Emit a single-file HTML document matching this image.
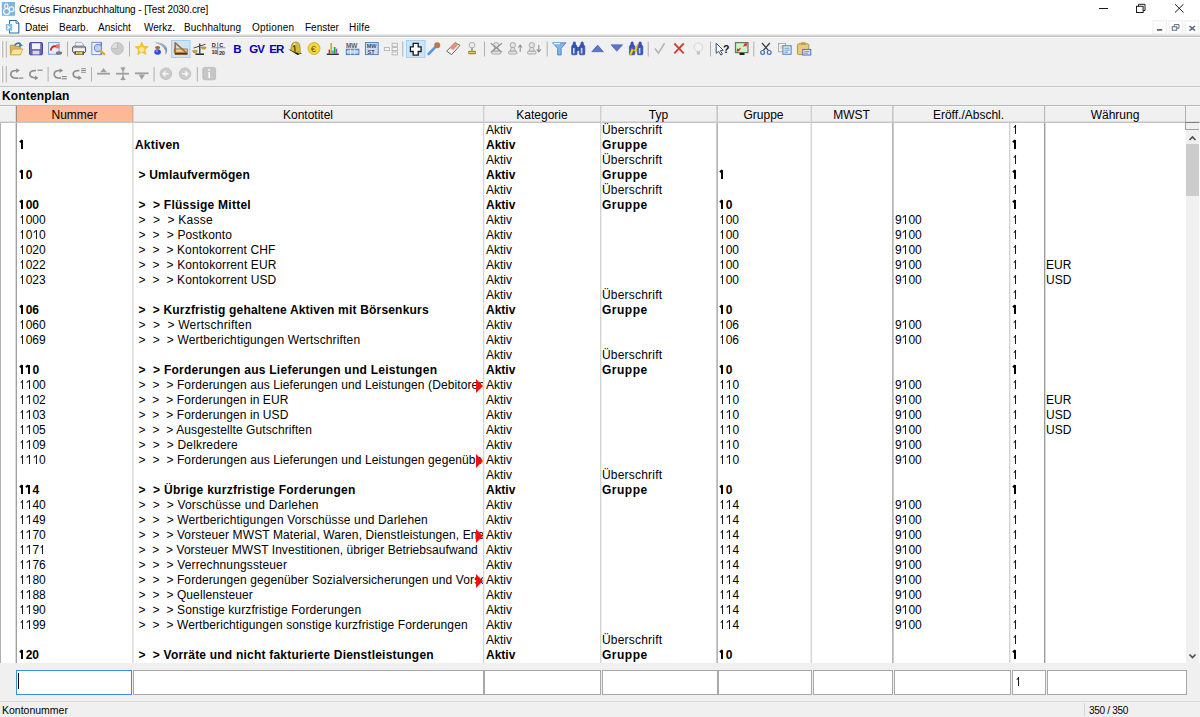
<!DOCTYPE html>
<html><head><meta charset="utf-8">
<style>
*{box-sizing:border-box}
html,body{margin:0;padding:0}
body{width:1200px;height:717px;overflow:hidden;position:relative;background:#f0f0f0;font-family:"Liberation Sans",sans-serif;color:#000}
.abs{position:absolute}
#top{position:absolute;left:0;top:0;width:1200px;height:34px;background:#fff}
.title{position:absolute;left:19px;top:3px;font-size:10px;color:#000;white-space:nowrap;line-height:14px;letter-spacing:-0.1px}
.menu{position:absolute;top:21px;font-size:10px;white-space:nowrap;line-height:14px;color:#000}
.label{position:absolute;left:2px;top:89px;font-size:12px;font-weight:bold;line-height:14px;letter-spacing:0.15px}
#grid{position:absolute;left:0;top:105px;width:1200px;height:558px;background:#fff;overflow:hidden}
#hdr{position:absolute;left:0;top:0;width:1200px;height:18px;background:#f0f0f0;border-top:1px solid #b9b9b9;border-bottom:1px solid #c4c4c4}
.h{position:absolute;top:1px;height:16px;font-size:12px;line-height:16px;text-align:center;color:#000;white-space:nowrap}
.hs{position:absolute;top:0;width:1px;height:16px;background:#bdbdbd}
.vl{position:absolute;width:1px;background:#dcdcdc}
.vd{position:absolute;width:1px;background:#a0a0a0}
.r{position:absolute;left:0;width:1186px;height:15px;font-size:12px;line-height:15px;color:#000;letter-spacing:0.18px}
.r .c{position:absolute;top:0;white-space:pre;overflow:hidden}
.d1{position:relative;color:transparent}
.d1::before{content:"";position:absolute;left:3.2px;bottom:3px;width:1.15px;height:8.7px;background:#1a1a1a}
.d1::after{content:"";position:absolute;left:0.5px;top:1.95px;width:3.2px;height:1.3px;background:#1a1a1a;transform:rotate(-42deg);transform-origin:right center}
.b .d1::before{left:2.3px;width:1.9px;height:8.7px;bottom:3.2px;background:#000}
.b .d1::after{left:-0.5px;top:1.45px;width:3.4px;height:1.8px;background:#000}
.b{font-weight:bold;letter-spacing:0.25px;color:#000}
.arr{position:absolute;left:476px;top:1px;width:0;height:0;border-top:7px solid transparent;border-bottom:7px solid transparent;border-left:7px solid #f01010}
.inp{position:absolute;top:670px;height:25px;background:#fff;border:1px solid #a8a8a8}
.status{position:absolute;left:2px;top:704px;font-size:10.5px;line-height:13px}
</style></head><body>
<div id="top"></div>
<!-- app icon -->
<svg class="abs" style="left:0;top:0" width="24" height="36" viewBox="0 0 24 36">
<rect x="1.8" y="2" width="13.2" height="13.8" fill="#82b3de"/>
<g fill="none" stroke="#fff" stroke-width="1.1"><ellipse cx="6.3" cy="6.2" rx="1.6" ry="2.4"/><circle cx="6.6" cy="11.5" r="3"/><circle cx="11.5" cy="9.2" r="2.4"/></g>
<path d="M9.6,20.5 H16 L18.8,23.3 V33 H9.6 Z" fill="#fff" stroke="#2a6e98" stroke-width="1.1" stroke-linejoin="round"/>
<path d="M16,20.5 V23.3 H18.8" fill="#dceaf4" stroke="#2a6e98" stroke-width="0.8"/>
<rect x="5.8" y="24" width="6.4" height="6.6" fill="#84bce8"/>
<path d="M7,25.6 L9.6,27.3 L7,29" fill="none" stroke="#fff" stroke-width="1.1"/>
</svg>
<div class="title">Crésus Finanzbuchhaltung - [Test 2030.cre]</div>
<div class="menu" style="left:25px">Datei</div>
<div class="menu" style="left:59px">Bearb.</div>
<div class="menu" style="left:98px">Ansicht</div>
<div class="menu" style="left:144px">Werkz.</div>
<div class="menu" style="left:184px;letter-spacing:0.15px">Buchhaltung</div>
<div class="menu" style="left:252px;letter-spacing:0.2px">Optionen</div>
<div class="menu" style="left:305px">Fenster</div>
<div class="menu" style="left:349px;letter-spacing:0.2px">Hilfe</div>
<!-- window controls -->
<svg class="abs" style="left:1090px;top:0" width="110" height="36" viewBox="1090 0 110 36">
<rect x="1099" y="8" width="9" height="1" fill="#1a1a1a"/>
<rect x="1136.5" y="6.3" width="6.6" height="6.2" fill="none" stroke="#1a1a1a" stroke-width="1"/>
<path d="M1138.5,6.3 V4.3 H1145 V10.5 H1143.1" fill="none" stroke="#1a1a1a" stroke-width="1"/>
<path d="M1175,4.2 L1183.5,12.5 M1183.5,4.2 L1175,12.5" stroke="#1a1a1a" stroke-width="1"/>
<g fill="#fff" stroke="#ececec" stroke-width="1"><rect x="1153" y="20.8" width="13.5" height="13"/><rect x="1169.2" y="20.8" width="13.5" height="13"/><rect x="1185.2" y="20.8" width="13.5" height="13"/></g>
<rect x="1157" y="29" width="5.2" height="1.8" fill="#5a6a82"/>
<g fill="none" stroke="#5a6a82" stroke-width="1"><rect x="1172.2" y="26.8" width="4.6" height="3.4"/><path d="M1174.2,26.8 V24.6 H1179 V28.2 H1176.8"/></g>
<path d="M1189.5,26 L1195,30.6 M1195,26 L1189.5,30.6" stroke="#5a6a82" stroke-width="1.6"/>
</svg>
<div class="abs" style="left:0;top:34px;width:1200px;height:1px;background:#ebebeb"></div>
<div class="abs" style="left:0;top:35px;width:1200px;height:1px;background:#d6d6d6"></div>
<div class="abs" style="left:0;top:36px;width:1200px;height:1px;background:#c4c4c4"></div>
<div class="abs" style="left:0;top:37px;width:1200px;height:1px;background:#f9f9f9"></div>
<svg class="abs" style="left:0;top:36px" width="830" height="52" viewBox="0 36 830 52">
<!-- grippers -->
<g fill="#fff"><rect x="1" y="41" width="1" height="16"/><rect x="4.5" y="41" width="1" height="16"/><rect x="1" y="66" width="1" height="16"/><rect x="4.5" y="66" width="1" height="16"/></g>
<g fill="#bcbcbc"><rect x="2" y="41" width="1.3" height="16.5"/><rect x="5.6" y="41" width="1.3" height="16.5"/><rect x="2" y="66" width="1.3" height="16.5"/><rect x="5.6" y="66" width="1.3" height="16.5"/></g>
<!-- separators tb1 -->
<g fill="#b0b0b0"><rect x="67" y="41.5" width="1" height="15"/><rect x="129" y="41.5" width="1" height="15"/><rect x="402.3" y="41.5" width="1" height="15"/><rect x="484" y="41.5" width="1" height="15"/><rect x="546.7" y="41.5" width="1" height="15"/><rect x="647.7" y="41.5" width="1" height="15"/><rect x="710" y="41.5" width="1" height="15"/><rect x="753.3" y="41.5" width="1" height="15"/>
<rect x="47.6" y="67" width="1" height="14.5"/><rect x="91" y="67" width="1" height="14.5"/><rect x="153.6" y="67" width="1" height="14.5"/><rect x="196.8" y="67" width="1" height="14.5"/></g>

<!-- 1 open folder -->
<path d="M10.3,54.6 V45.3 h3.6 l1,1 h5.5 v8.3 z" fill="#e0b850" stroke="#b89030" stroke-width="0.8"/>
<path d="M10.3,54.8 l2.6,-5.8 h10 l-2.6,5.8 z" fill="#f8e4a0" stroke="#c8a040" stroke-width="0.8"/>
<path d="M14.5,45.5 q2.5,-3.5 6,-1.8" fill="none" stroke="#3a70b8" stroke-width="1.7"/>
<path d="M19.2,42.2 l3.8,3.2 l-4.2,2.2 z" fill="#4a80c8"/>
<!-- 2 save -->
<rect x="29.5" y="42.6" width="13" height="12.2" rx="1" fill="#6868b8" stroke="#3a3a8a" stroke-width="0.9"/>
<rect x="32" y="43.3" width="8.2" height="5.8" fill="#f4f4f6"/>
<rect x="32.6" y="50.8" width="6.8" height="3.6" fill="#d8d8e8"/>
<!-- 3 revert -->
<rect x="48.5" y="42.5" width="10.5" height="11.8" fill="#e4eefa" stroke="#80a8d8" stroke-width="1"/>
<path d="M50.8,50.5 q0.5,-5 5.5,-4" fill="none" stroke="#d42828" stroke-width="2"/>
<rect x="56" y="44.3" width="3.5" height="4" fill="#f07070"/>
<ellipse cx="59" cy="53" rx="3.2" ry="1.8" fill="#7a7a7a"/>
<!-- 4 printer -->
<path d="M75.4,46.4 V42.4 H81.6 L83.2,44 V46.4" fill="#eef4fa" stroke="#90a8c8" stroke-width="0.8"/>
<rect x="72.6" y="46.2" width="13" height="6.6" rx="1.8" fill="#f4f4f4" stroke="#505050" stroke-width="1"/>
<rect x="73.2" y="46.6" width="11.8" height="1.6" fill="#9a9a9a"/>
<rect x="74.4" y="51.2" width="9.6" height="3.6" fill="#505050"/>
<rect x="76" y="51.8" width="6.4" height="2.4" fill="#f0d040"/>
<rect x="77.5" y="52.2" width="2" height="1.6" fill="#c8a020"/>
<!-- 5 preview -->
<rect x="91.8" y="42.4" width="9.6" height="12.2" fill="#e8f2fc" stroke="#7098cc" stroke-width="1"/>
<rect x="100.6" y="42.4" width="1" height="12.2" fill="#3a68a8"/>
<circle cx="98" cy="48" r="3.6" fill="#b4d4f4" stroke="#9484c8" stroke-width="1.1"/>
<path d="M100.8,51 L104.2,54.2" stroke="#d8b030" stroke-width="2.4" stroke-linecap="round"/>
<!-- 6 gray pie -->
<circle cx="117.4" cy="48.5" r="6" fill="#cbcbcb" stroke="#bdbdbd" stroke-width="0.9"/>
<path d="M117.4,48.5 V43 A5.5,5.5 0 0 0 111.9,48.5 Z" fill="#dedede"/>
<path d="M117.4,43 V48.5 H111.9" fill="none" stroke="#b4b4b4" stroke-width="0.7"/>
<!-- 7 star -->
<polygon points="141.70,42.00 143.58,46.31 148.26,46.77 144.74,49.89 145.76,54.48 141.70,52.10 137.64,54.48 138.66,49.89 135.14,46.77 139.82,46.31" fill="#f5c829" stroke="#e3b21c" stroke-width="0.6" stroke-linejoin="round"/>
<circle cx="141.7" cy="49.6" r="2.6" fill="#fae59a"/>
<!-- 8 inkwell + quill -->
<path d="M154.6,42.6 Q162,41.8 166.2,46.8 Q168.4,50.5 165.6,55 Q166,50.8 163.6,47.6 Q160.5,44.2 154.6,42.6 Z" fill="#7e98b8"/>
<path d="M156,43 Q162,43 165,47.5" fill="none" stroke="#b8c8dc" stroke-width="0.7"/>
<ellipse cx="157.6" cy="47.6" rx="2.6" ry="1.5" fill="#a86838"/>
<ellipse cx="157.6" cy="52" rx="3.3" ry="2.8" fill="#3344e0"/>
<ellipse cx="156.8" cy="51.2" rx="1.2" ry="1" fill="#8890ff"/>
<!-- 9 selected ruler -->
<rect x="171.5" y="40.5" width="18.5" height="17" fill="#cce4f7" stroke="#99d1ff" stroke-width="1"/>
<rect x="174.2" y="49" width="13" height="3.2" fill="#f0d890" stroke="#705018" stroke-width="0.7"/>
<path d="M175.2,42.8 V53.6 H187.2 Z" fill="none" stroke="#b86a28" stroke-width="1.7" stroke-linejoin="round"/>
<rect x="175" y="53" width="12.4" height="1.6" fill="#5a2e10"/>
<!-- 10 scale -->
<rect x="199" y="43.6" width="1.5" height="10" fill="#484848"/>
<rect x="195.5" y="53.4" width="8.5" height="1.6" fill="#303030"/>
<path d="M193.5,48 L205.5,44.3" stroke="#484848" stroke-width="1"/>
<path d="M192.6,50.6 h4.6 a2.3,2.3 0 0 1 -4.6,0 z" fill="#d8a830" stroke="#8a6a10" stroke-width="0.5"/>
<path d="M201.4,47 h4.6 a2.3,2.3 0 0 1 -4.6,0 z" fill="#d8a830" stroke="#8a6a10" stroke-width="0.5"/>
<!-- 11 D|C -->
<rect x="217" y="42.2" width="1.3" height="12.8" fill="#8aa4c0"/>
<rect x="211.5" y="47.1" width="14" height="1.2" fill="#8aa4c0"/>
<g font-family="Liberation Sans" font-size="5.6" font-weight="bold" fill="#303030"><text x="211.8" y="46.6">D</text><text x="219.3" y="46.6">C</text><text x="211.6" y="53.6" letter-spacing="-0.4">10</text><text x="219" y="54.6" letter-spacing="-0.4">20</text></g>
<!-- B GV ER -->
<g font-family="Liberation Sans" font-weight="bold" font-size="11.5" fill="#0000b8"><text x="233.2" y="53.3">B</text><text x="249.2" y="53.3" letter-spacing="-0.8">GV</text><text x="269.3" y="53.3" letter-spacing="-0.9">ER</text></g>
<!-- bell -->
<polygon points="288.3,49.3 291.6,50 302,53.3 297.6,55.1" fill="#141414"/>
<path d="M291,50.6 L291.3,46 Q291.9,42 295.8,42 Q299.7,42.2 300,46.6 L300.3,53.7 Z" fill="#d2bc3c" stroke="#9c8418" stroke-width="0.7"/>
<ellipse cx="294.6" cy="44.4" rx="1" ry="1.1" fill="#fff8d0"/>
<path d="M293.2,46.8 L294.6,45.8 L295.2,51.6" fill="none" stroke="#5a4a08" stroke-width="1.3"/>
<!-- euro -->
<circle cx="314" cy="48.5" r="6" fill="#f2d830" stroke="#c8b048" stroke-width="0.9"/>
<text x="310.8" y="52" font-family="Liberation Sans" font-size="9.5" fill="#7a5a08">€</text>
<!-- bar chart -->
<rect x="326.8" y="53.6" width="12" height="1.3" fill="#181818"/>
<rect x="328.6" y="49.7" width="1.6" height="4" fill="#e02020"/>
<rect x="330.4" y="43" width="1.7" height="10.7" fill="#d8a830"/>
<rect x="332.2" y="50.5" width="1.5" height="3.2" fill="#30a0e0"/>
<rect x="333.8" y="47" width="1.7" height="6.7" fill="#20b030"/>
<rect x="335.6" y="48.7" width="1.7" height="5" fill="#9060d0"/>
<!-- MW grid -->
<text x="346" y="47.6" font-family="Liberation Sans" font-weight="bold" font-size="6.5" fill="#506070" letter-spacing="-0.2">MW</text>
<rect x="346.3" y="49.2" width="12.6" height="5.4" fill="#a8c8f0" stroke="#4070b0" stroke-width="0.9"/>
<path d="M346.5,51.9 H358.7 M350.5,49.2 V54.6 M354.6,49.2 V54.6" stroke="#f4f8ff" stroke-width="0.7"/>
<!-- MWST -->
<rect x="365.4" y="42.6" width="12.8" height="12" fill="#c8dcf4" stroke="#4878b8" stroke-width="0.9"/>
<g font-family="Liberation Sans" font-weight="bold" font-size="5.5" fill="#405060"><text x="366.8" y="47.8" letter-spacing="-0.2">MW</text><text x="367.6" y="53.6" letter-spacing="-0.1">ST</text></g>
<!-- tree disabled -->
<g fill="#f6f6f6" stroke="#b4b4b4" stroke-width="0.9"><rect x="384.4" y="47.6" width="5" height="3"/><rect x="392.1" y="43.3" width="5.4" height="3"/><rect x="392.1" y="47.6" width="5.4" height="3"/><rect x="392.1" y="51.9" width="5.4" height="3"/></g>
<!-- selected cross -->
<rect x="406.5" y="40.5" width="18.5" height="17" fill="#cce4f7" stroke="#99d1ff" stroke-width="1"/>
<path d="M413.2,43.3 h5 v3.6 h2.9 v4.6 h-2.9 v3.6 h-5 v-3.6 h-2.8 v-4.6 h2.8 z" fill="#fff" stroke="#1a1a1a" stroke-width="1.3"/>
<!-- pipette -->
<path d="M428.6,54 L434.8,47.6" stroke="#5898e8" stroke-width="2.6" stroke-linecap="round"/>
<circle cx="437.2" cy="45.2" r="3" fill="#b87850"/>
<!-- eraser -->
<polygon points="446.6,51.2 455,42.6 460,45.4 451.6,54.6" fill="#f2f2f2" stroke="#5a5a5a" stroke-width="0.9"/>
<polygon points="449.8,47.9 455,42.6 458.4,44.6 453.2,50" fill="#e89070"/>
<!-- stamp -->
<circle cx="472" cy="45.2" r="2.8" fill="#eeeee4" stroke="#a0a0a0" stroke-width="0.8"/>
<rect x="471" y="47.8" width="2" height="3" fill="#a0a0a0"/>
<rect x="468.2" y="50.8" width="7.8" height="3.4" rx="0.8" fill="#c87a30"/>
<rect x="469" y="52" width="6.2" height="0.9" fill="#e8d060"/>
<!-- stamps gray -->
<g fill="#e4e4e4" stroke="#9a9a9a" stroke-width="0.8">
<circle cx="496.2" cy="45.2" r="2.7"/><path d="M494.8,47.6 L493.4,51.2 H499 L497.6,47.6 Z"/><rect x="491.8" y="51.2" width="8.8" height="2.8" rx="1"/>
<circle cx="512.8" cy="45.2" r="2.7"/><path d="M511.4,47.6 L510,51.2 H515.6 L514.2,47.6 Z"/><rect x="508.6" y="51.2" width="8.4" height="2.8" rx="1"/>
<circle cx="531.8" cy="45.2" r="2.7"/><path d="M530.4,47.6 L529,51.2 H534.6 L533.2,47.6 Z"/><rect x="527.6" y="51.2" width="8.4" height="2.8" rx="1"/>
</g>
<g stroke="#909090" stroke-width="1.1" fill="none">
<path d="M490.8,43.3 L502,52.2 M502,43.3 L490.8,52.2"/>
<path d="M520.2,51.8 V45.5 M518.3,47.5 L520.2,45.2 L522,47.5"/>
<path d="M538.8,45 V51.5 M536.8,49.4 L538.8,51.8 L540.8,49.4"/>
</g>
<!-- funnel -->
<polygon points="552.5,42.8 566,42.8 561.2,48.3 561.2,55 557.6,55 557.6,48.3" fill="#80b4e4" stroke="#4a7cc0" stroke-width="0.8"/>
<path d="M553.8,43.6 H560" stroke="#e8f4ff" stroke-width="1.2"/>
<!-- binoculars -->
<g fill="#3858c0" stroke="#28409a" stroke-width="0.6">
<rect x="571.6" y="45.5" width="5.4" height="9.3" rx="1"/><rect x="579.4" y="45.5" width="5.4" height="9.3" rx="1"/>
<path d="M572.6,45.8 L573.5,42 H575.2 L576,45.8 Z"/><path d="M580.4,45.8 L581.3,42 H583 L583.8,45.8 Z"/>
<rect x="576.6" y="47.5" width="3.2" height="3"/>
<rect x="629.4" y="45.5" width="5.4" height="9.3" rx="1"/><rect x="637.4" y="45.5" width="5.4" height="9.3" rx="1"/>
<path d="M630.4,45.8 L631.3,42 H633 L633.8,45.8 Z"/><path d="M638.4,45.8 L639.3,42 H641 L641.8,45.8 Z"/>
</g>
<g fill="#c8d8f8"><rect x="573" y="48" width="1.6" height="5.5"/><rect x="580.8" y="48" width="1.6" height="5.5"/><rect x="638.8" y="48" width="1.6" height="5.5"/></g>
<polygon points="629.4,55 631.6,48.6 634.2,50.2 637.6,44.4 638.2,45 636,51.8 633.4,50.4 631.2,55" fill="#f8e020" stroke="#b89000" stroke-width="0.6"/>
<!-- triangles -->
<polygon points="591.8,51.7 597.6,45.1 603.4,51.7" fill="#5878d0" stroke="#3858b0" stroke-width="0.6"/>
<polygon points="611,44.8 622.6,44.8 616.8,51.3" fill="#5878d0" stroke="#3858b0" stroke-width="0.6"/>
<!-- check -->
<path d="M655,48.6 L658.4,53.2 L664.6,43.2" fill="none" stroke="#b4b4b4" stroke-width="1.6"/>
<!-- red x -->
<path d="M674.3,43.5 L683.7,53.3 M683.7,43.5 L674.3,53.3" stroke="#c84434" stroke-width="1.9"/>
<!-- bulb -->
<circle cx="698.4" cy="47.2" r="4.3" fill="#f2f2f2" stroke="#d2d2d2" stroke-width="0.9"/>
<rect x="696.8" y="51.3" width="3.2" height="3.2" fill="#c4c4c4"/>
<!-- help cursor -->
<polygon points="716.2,43.2 716.2,53.3 718.6,51.2 720.8,55 722.4,54.2 720.4,50.5 723.2,50.3" fill="#fff" stroke="#344c88" stroke-width="1"/>
<text x="723" y="52.6" font-family="Liberation Sans" font-weight="bold" font-size="10.5" fill="#101010">?</text>
<!-- monitor -->
<rect x="735.5" y="42.6" width="12.5" height="10" fill="#c8f4c8" stroke="#707070" stroke-width="1.2"/>
<path d="M737.6,50.6 L740.6,48.2 M743.4,46.4 L746.4,44" stroke="#e82020" stroke-width="1.2"/>
<polygon points="736.6,51.8 737.2,48.2 740,50.8" fill="#e82020"/><polygon points="747.2,43.2 743.6,43.8 746.4,46.8" fill="#e82020"/>
<rect x="739.5" y="53" width="5" height="2" fill="#202020"/>
<!-- scissors -->
<path d="M762,43 L768.6,50.6 M769.8,43 L763.2,50.6" stroke="#2a3848" stroke-width="1.2"/>
<circle cx="762.6" cy="52.4" r="1.9" fill="none" stroke="#4070c0" stroke-width="1.2"/>
<circle cx="769.2" cy="52.4" r="1.9" fill="none" stroke="#4070c0" stroke-width="1.2"/>
<!-- copy -->
<rect x="778.4" y="43.4" width="7" height="8.4" fill="#f6f6f6" stroke="#9a9a9a" stroke-width="0.8"/>
<path d="M779.8,46 H783 M779.8,48 H783" stroke="#b0b0b0" stroke-width="0.6"/>
<rect x="782.9" y="45.8" width="8.2" height="8.4" fill="#eaf2fc" stroke="#3e6cb0" stroke-width="0.9"/>
<path d="M784.4,48.2 H789.6 M784.4,50.2 H789.6 M784.4,52.2 H788" stroke="#4a78b8" stroke-width="0.8"/>
<!-- paste -->
<rect x="797.4" y="43.8" width="11.4" height="10.8" rx="1.5" fill="#e6cc78" stroke="#a88e38" stroke-width="0.9"/>
<rect x="800.8" y="42.2" width="4.8" height="2.6" rx="0.6" fill="#b89c48"/>
<rect x="802.8" y="49.4" width="8" height="5.6" fill="#dbe8f8" stroke="#3e6cb0" stroke-width="0.9"/>
<path d="M804.2,51.6 H809.4 M804.2,53.2 H808" stroke="#4a78b8" stroke-width="0.7"/>

<!-- toolbar 2 -->
<g fill="none" stroke="#8e8e8e" stroke-width="1.7">
<path d="M17,70.5 Q10.8,70.2 10.8,74.2 Q10.8,78.2 17,78.2 H18"/>
<path d="M36,70.5 Q29.8,70.5 29.8,74 Q29.8,77.8 35.6,77.8"/>
<path d="M60.4,70.5 Q54.2,70.2 54.2,74.2 Q54.2,78.2 60.4,78.2 H61"/>
<path d="M79.4,70.5 Q73.2,70.5 73.2,74 Q73.2,77.8 79,77.8"/>
</g>
<g fill="#8e8e8e">
<polygon points="16.2,68.3 19.8,70.6 16.2,73"/><rect x="18.6" y="77.5" width="4.7" height="1.3"/>
<polygon points="35,75.5 38.4,78 35,80.3"/><rect x="37.6" y="69.6" width="5" height="1.3"/>
<polygon points="59.6,68.3 63.2,70.6 59.6,73"/><rect x="61.8" y="76" width="5" height="1.2"/><rect x="61.8" y="78.2" width="5" height="1.2"/>
<polygon points="78.4,75.5 81.8,78 78.4,80.3"/><rect x="81.2" y="68.2" width="4.7" height="1"/><rect x="81.2" y="70" width="4.7" height="1"/><rect x="81.2" y="71.8" width="4.7" height="1"/>
</g>
<g fill="#a0a0a0">
<rect x="97" y="72.8" width="13" height="1.8"/><polygon points="100.2,72.2 103.5,68 106.8,72.2"/>
<rect x="116" y="72.8" width="13" height="1.8"/><polygon points="120.2,67.4 125.8,67.4 123,71.6"/><polygon points="120.2,80 125.8,80 123,75.8"/><rect x="122.4" y="66.8" width="1.2" height="13.6"/>
<rect x="135" y="72.4" width="13.5" height="1.8"/><polygon points="138.5,74.6 145,74.6 141.7,79.8"/>
</g>
<circle cx="165.9" cy="73.7" r="5.8" fill="#cbcbcb" stroke="#bdbdbd" stroke-width="0.8"/>
<circle cx="185" cy="73.7" r="5.8" fill="#cbcbcb" stroke="#bdbdbd" stroke-width="0.8"/>
<path d="M168.6,73.7 H163.6 M165.6,71.3 L163.2,73.7 L165.6,76.1" fill="none" stroke="#f4f4f4" stroke-width="1.5"/>
<path d="M182.3,73.7 H187.3 M185.3,71.3 L187.7,73.7 L185.3,76.1" fill="none" stroke="#f4f4f4" stroke-width="1.5"/>
<rect x="202.8" y="67.4" width="12.8" height="12.4" rx="2" fill="#c6c6c6" stroke="#b8b8b8" stroke-width="0.8"/>
<rect x="208.3" y="69" width="1.8" height="1.8" fill="#f6f6f6"/><rect x="208.3" y="72" width="1.8" height="6" fill="#f6f6f6"/>
</svg>

<div class="abs" style="left:0;top:86px;width:1200px;height:1px;background:#c6c6c6"></div>
<div class="abs" style="left:0;top:87px;width:1200px;height:1px;background:#f4f4f4"></div>
<div class="label">Kontenplan</div>

<div id="grid">
 <div class="abs" style="left:0px;top:18px;width:1px;height:540px;background:#b0b0b0"></div>
 <div class="abs" style="left:15px;top:18px;width:1px;height:540px;background:#dadada"></div>
 <div class="abs" style="left:16px;top:18px;width:1px;height:540px;background:#a0a0a0"></div>
 <div class="abs" style="left:132px;top:18px;width:1px;height:540px;background:#e0e0e0"></div>
 <div class="abs" style="left:133px;top:18px;width:1px;height:540px;background:#e7e7e7"></div>
 <div class="abs" style="left:483px;top:18px;width:1px;height:540px;background:#d6d6d6"></div>
 <div class="abs" style="left:484px;top:18px;width:1px;height:540px;background:#f2f2f2"></div>
 <div class="abs" style="left:600px;top:18px;width:1px;height:540px;background:#d4d4d4"></div>
 <div class="abs" style="left:601px;top:18px;width:1px;height:540px;background:#ededed"></div>
 <div class="abs" style="left:716px;top:18px;width:1px;height:540px;background:#cacaca"></div>
 <div class="abs" style="left:717px;top:18px;width:1px;height:540px;background:#b4b4b4"></div>
 <div class="abs" style="left:810px;top:18px;width:1px;height:540px;background:#ececec"></div>
 <div class="abs" style="left:811px;top:18px;width:1px;height:540px;background:#d6d6d6"></div>
 <div class="abs" style="left:892px;top:18px;width:1px;height:540px;background:#b4b4b4"></div>
 <div class="abs" style="left:893px;top:18px;width:1px;height:540px;background:#cacaca"></div>
 <div class="abs" style="left:1009px;top:18px;width:1px;height:540px;background:#d4d4d4"></div>
 <div class="abs" style="left:1010px;top:18px;width:1px;height:540px;background:#ececec"></div>
 <div class="abs" style="left:1044px;top:18px;width:1px;height:540px;background:#9a9a9a"></div>
 <div class="abs" style="left:1045px;top:18px;width:1px;height:540px;background:#dadada"></div>
 <div id="hdr">
  <div class="abs" style="left:0;top:0;width:1200px;height:1px;background:#f7f7f7"></div>
  <div class="abs" style="left:0;top:15px;width:1200px;height:1px;background:#dcdcdc"></div>
  <div class="abs" style="left:17px;top:0;width:115px;height:16px;background:#fcb994"></div>
  <div class="hs" style="left:15px;background:#dcdcdc"></div>
  <div class="hs" style="left:16px;background:#a08a80"></div>
  <div class="hs" style="left:132px;background:#d4aa94"></div>
  <div class="hs" style="left:133px;background:#d6d6d6"></div>
  <div class="hs" style="left:483px;background:#d0d0d0"></div>
  <div class="hs" style="left:484px;background:#e2e2e2"></div>
  <div class="hs" style="left:600px;background:#d0d0d0"></div>
  <div class="hs" style="left:601px;background:#e2e2e2"></div>
  <div class="hs" style="left:716px;background:#d6d6d6"></div>
  <div class="hs" style="left:717px;background:#c8c8c8"></div>
  <div class="hs" style="left:810px;background:#e2e2e2"></div>
  <div class="hs" style="left:811px;background:#d0d0d0"></div>
  <div class="hs" style="left:892px;background:#c8c8c8"></div>
  <div class="hs" style="left:893px;background:#d6d6d6"></div>
  <div class="hs" style="left:1044px;background:#b8b8b8"></div>
  <div class="hs" style="left:1045px;background:#e8e8e8"></div>
  <div class="hs" style="left:1185px;background:#b0b0b0"></div>
  <div class="h" style="left:17px;width:115px">Nummer</div>
  <div class="h" style="left:133px;width:350px">Kontotitel</div>
  <div class="h" style="left:484px;width:116px">Kategorie</div>
  <div class="h" style="left:601px;width:115px">Typ</div>
  <div class="h" style="left:717px;width:93px">Gruppe</div>
  <div class="h" style="left:811px;width:81px">MWST</div>
  <div class="h" style="left:893px;width:151px">Eröff./Abschl.</div>
  <div class="h" style="left:1045px;width:140px">Währung</div>
 </div>
 <!-- scrollbar -->
 <div class="abs" style="left:1186px;top:18px;width:14px;height:540px;background:#f0f0f0"></div>
 <div class="abs" style="left:1185px;top:17px;width:14px;height:8px;background:#f0f0f0;border-left:1px solid #a0a0a0;border-top:1px solid #808080;border-bottom:1px solid #a0a0a0"></div>
 <div class="abs" style="left:1186px;top:39px;width:13px;height:52px;background:#cdcdcd"></div>
 <svg class="abs" style="left:1186px;top:28px" width="14" height="12" viewBox="0 0 14 12"><path d="M3.5,7 L6.5,4 L9.5,7" fill="none" stroke="#505050" stroke-width="1.7"/></svg>
 <svg class="abs" style="left:1186px;top:546px" width="14" height="12" viewBox="0 0 14 12"><path d="M3.5,3.5 L6.5,6.5 L9.5,3.5" fill="none" stroke="#505050" stroke-width="1.7"/></svg>
 <div class="abs" style="left:1199px;top:18px;width:1px;height:540px;background:#fafafa"></div>
</div>
<div id="rows" class="abs" style="left:0;top:0">
<div class="r" style="top:123px"><span class="c" style="left:486px;width:114px;letter-spacing:0">Aktiv</span><span class="c" style="left:602px;width:113px;letter-spacing:0.2px">Überschrift</span><span class="c" style="left:1012px;width:30px;letter-spacing:0"><span class="d1">1</span></span></div>
<div class="r b" style="top:138px"><span class="c" style="left:19px;width:113px;letter-spacing:0"><span class="d1">1</span></span><span class="c" style="left:135px;width:348px;letter-spacing:0.208px">Aktiven</span><span class="c" style="left:486px;width:114px;letter-spacing:0">Aktiv</span><span class="c" style="left:602px;width:113px;letter-spacing:0.5px">Gruppe</span><span class="c" style="left:1012px;width:30px;letter-spacing:0"><span class="d1">1</span></span></div>
<div class="r" style="top:153px"><span class="c" style="left:486px;width:114px;letter-spacing:0">Aktiv</span><span class="c" style="left:602px;width:113px;letter-spacing:0.2px">Überschrift</span><span class="c" style="left:1012px;width:30px;letter-spacing:0"><span class="d1">1</span></span></div>
<div class="r b" style="top:168px"><span class="c" style="left:19px;width:113px;letter-spacing:0"><span class="d1">1</span>0</span><span class="c" style="left:135px;width:348px;letter-spacing:0.194px"> &gt; Umlaufvermögen</span><span class="c" style="left:486px;width:114px;letter-spacing:0">Aktiv</span><span class="c" style="left:602px;width:113px;letter-spacing:0.5px">Gruppe</span><span class="c" style="left:719px;width:90px;letter-spacing:0"><span class="d1">1</span></span><span class="c" style="left:1012px;width:30px;letter-spacing:0"><span class="d1">1</span></span></div>
<div class="r" style="top:183px"><span class="c" style="left:486px;width:114px;letter-spacing:0">Aktiv</span><span class="c" style="left:602px;width:113px;letter-spacing:0.2px">Überschrift</span><span class="c" style="left:1012px;width:30px;letter-spacing:0"><span class="d1">1</span></span></div>
<div class="r b" style="top:198px"><span class="c" style="left:19px;width:113px;letter-spacing:0"><span class="d1">1</span>00</span><span class="c" style="left:135px;width:348px;letter-spacing:0.250px"> &gt;  &gt; Flüssige Mittel</span><span class="c" style="left:486px;width:114px;letter-spacing:0">Aktiv</span><span class="c" style="left:602px;width:113px;letter-spacing:0.5px">Gruppe</span><span class="c" style="left:719px;width:90px;letter-spacing:0"><span class="d1">1</span>0</span><span class="c" style="left:1012px;width:30px;letter-spacing:0"><span class="d1">1</span></span></div>
<div class="r" style="top:213px"><span class="c" style="left:19px;width:113px;letter-spacing:0"><span class="d1">1</span>000</span><span class="c" style="left:135px;width:348px;letter-spacing:0.249px"> &gt;  &gt;  &gt; Kasse</span><span class="c" style="left:486px;width:114px;letter-spacing:0">Aktiv</span><span class="c" style="left:719px;width:90px;letter-spacing:0"><span class="d1">1</span>00</span><span class="c" style="left:895px;width:114px;letter-spacing:0">9<span class="d1">1</span>00</span><span class="c" style="left:1012px;width:30px;letter-spacing:0"><span class="d1">1</span></span></div>
<div class="r" style="top:228px"><span class="c" style="left:19px;width:113px;letter-spacing:0"><span class="d1">1</span>0<span class="d1">1</span>0</span><span class="c" style="left:135px;width:348px;letter-spacing:0.151px"> &gt;  &gt;  &gt; Postkonto</span><span class="c" style="left:486px;width:114px;letter-spacing:0">Aktiv</span><span class="c" style="left:719px;width:90px;letter-spacing:0"><span class="d1">1</span>00</span><span class="c" style="left:895px;width:114px;letter-spacing:0">9<span class="d1">1</span>00</span><span class="c" style="left:1012px;width:30px;letter-spacing:0"><span class="d1">1</span></span></div>
<div class="r" style="top:243px"><span class="c" style="left:19px;width:113px;letter-spacing:0"><span class="d1">1</span>020</span><span class="c" style="left:135px;width:348px;letter-spacing:0.109px"> &gt;  &gt;  &gt; Kontokorrent CHF</span><span class="c" style="left:486px;width:114px;letter-spacing:0">Aktiv</span><span class="c" style="left:719px;width:90px;letter-spacing:0"><span class="d1">1</span>00</span><span class="c" style="left:895px;width:114px;letter-spacing:0">9<span class="d1">1</span>00</span><span class="c" style="left:1012px;width:30px;letter-spacing:0"><span class="d1">1</span></span></div>
<div class="r" style="top:258px"><span class="c" style="left:19px;width:113px;letter-spacing:0"><span class="d1">1</span>022</span><span class="c" style="left:135px;width:348px;letter-spacing:0.126px"> &gt;  &gt;  &gt; Kontokorrent EUR</span><span class="c" style="left:486px;width:114px;letter-spacing:0">Aktiv</span><span class="c" style="left:719px;width:90px;letter-spacing:0"><span class="d1">1</span>00</span><span class="c" style="left:895px;width:114px;letter-spacing:0">9<span class="d1">1</span>00</span><span class="c" style="left:1012px;width:30px;letter-spacing:0"><span class="d1">1</span></span><span class="c" style="left:1046px;width:138px;letter-spacing:0">EUR</span></div>
<div class="r" style="top:273px"><span class="c" style="left:19px;width:113px;letter-spacing:0"><span class="d1">1</span>023</span><span class="c" style="left:135px;width:348px;letter-spacing:0.117px"> &gt;  &gt;  &gt; Kontokorrent USD</span><span class="c" style="left:486px;width:114px;letter-spacing:0">Aktiv</span><span class="c" style="left:719px;width:90px;letter-spacing:0"><span class="d1">1</span>00</span><span class="c" style="left:895px;width:114px;letter-spacing:0">9<span class="d1">1</span>00</span><span class="c" style="left:1012px;width:30px;letter-spacing:0"><span class="d1">1</span></span><span class="c" style="left:1046px;width:138px;letter-spacing:0">USD</span></div>
<div class="r" style="top:288px"><span class="c" style="left:486px;width:114px;letter-spacing:0">Aktiv</span><span class="c" style="left:602px;width:113px;letter-spacing:0.2px">Überschrift</span><span class="c" style="left:1012px;width:30px;letter-spacing:0"><span class="d1">1</span></span></div>
<div class="r b" style="top:303px"><span class="c" style="left:19px;width:113px;letter-spacing:0"><span class="d1">1</span>06</span><span class="c" style="left:135px;width:348px;letter-spacing:0.189px"> &gt;  &gt; Kurzfristig gehaltene Aktiven mit Börsenkurs</span><span class="c" style="left:486px;width:114px;letter-spacing:0">Aktiv</span><span class="c" style="left:602px;width:113px;letter-spacing:0.5px">Gruppe</span><span class="c" style="left:719px;width:90px;letter-spacing:0"><span class="d1">1</span>0</span><span class="c" style="left:1012px;width:30px;letter-spacing:0"><span class="d1">1</span></span></div>
<div class="r" style="top:318px"><span class="c" style="left:19px;width:113px;letter-spacing:0"><span class="d1">1</span>060</span><span class="c" style="left:135px;width:348px;letter-spacing:0.247px"> &gt;  &gt;  &gt; Wertschriften</span><span class="c" style="left:486px;width:114px;letter-spacing:0">Aktiv</span><span class="c" style="left:719px;width:90px;letter-spacing:0"><span class="d1">1</span>06</span><span class="c" style="left:895px;width:114px;letter-spacing:0">9<span class="d1">1</span>00</span><span class="c" style="left:1012px;width:30px;letter-spacing:0"><span class="d1">1</span></span></div>
<div class="r" style="top:333px"><span class="c" style="left:19px;width:113px;letter-spacing:0"><span class="d1">1</span>069</span><span class="c" style="left:135px;width:348px;letter-spacing:0.161px"> &gt;  &gt;  &gt; Wertberichtigungen Wertschriften</span><span class="c" style="left:486px;width:114px;letter-spacing:0">Aktiv</span><span class="c" style="left:719px;width:90px;letter-spacing:0"><span class="d1">1</span>06</span><span class="c" style="left:895px;width:114px;letter-spacing:0">9<span class="d1">1</span>00</span><span class="c" style="left:1012px;width:30px;letter-spacing:0"><span class="d1">1</span></span></div>
<div class="r" style="top:348px"><span class="c" style="left:486px;width:114px;letter-spacing:0">Aktiv</span><span class="c" style="left:602px;width:113px;letter-spacing:0.2px">Überschrift</span><span class="c" style="left:1012px;width:30px;letter-spacing:0"><span class="d1">1</span></span></div>
<div class="r b" style="top:363px"><span class="c" style="left:19px;width:113px;letter-spacing:0"><span class="d1">1</span><span class="d1">1</span>0</span><span class="c" style="left:135px;width:348px;letter-spacing:0.254px"> &gt;  &gt; Forderungen aus Lieferungen und Leistungen</span><span class="c" style="left:486px;width:114px;letter-spacing:0">Aktiv</span><span class="c" style="left:602px;width:113px;letter-spacing:0.5px">Gruppe</span><span class="c" style="left:719px;width:90px;letter-spacing:0"><span class="d1">1</span>0</span><span class="c" style="left:1012px;width:30px;letter-spacing:0"><span class="d1">1</span></span></div>
<div class="r" style="top:378px"><span class="c" style="left:19px;width:113px;letter-spacing:0"><span class="d1">1</span><span class="d1">1</span>00</span><span class="c" style="left:135px;width:348px;letter-spacing:0.100px"> &gt;  &gt;  &gt; Forderungen aus Lieferungen und Leistungen (Debitoren)</span><span class="c" style="left:486px;width:114px;letter-spacing:0">Aktiv</span><span class="c" style="left:719px;width:90px;letter-spacing:0"><span class="d1">1</span><span class="d1">1</span>0</span><span class="c" style="left:895px;width:114px;letter-spacing:0">9<span class="d1">1</span>00</span><span class="c" style="left:1012px;width:30px;letter-spacing:0"><span class="d1">1</span></span><i class="arr"></i></div>
<div class="r" style="top:393px"><span class="c" style="left:19px;width:113px;letter-spacing:0"><span class="d1">1</span><span class="d1">1</span>02</span><span class="c" style="left:135px;width:348px;letter-spacing:0.088px"> &gt;  &gt;  &gt; Forderungen in EUR</span><span class="c" style="left:486px;width:114px;letter-spacing:0">Aktiv</span><span class="c" style="left:719px;width:90px;letter-spacing:0"><span class="d1">1</span><span class="d1">1</span>0</span><span class="c" style="left:895px;width:114px;letter-spacing:0">9<span class="d1">1</span>00</span><span class="c" style="left:1012px;width:30px;letter-spacing:0"><span class="d1">1</span></span><span class="c" style="left:1046px;width:138px;letter-spacing:0">EUR</span></div>
<div class="r" style="top:408px"><span class="c" style="left:19px;width:113px;letter-spacing:0"><span class="d1">1</span><span class="d1">1</span>03</span><span class="c" style="left:135px;width:348px;letter-spacing:0.088px"> &gt;  &gt;  &gt; Forderungen in USD</span><span class="c" style="left:486px;width:114px;letter-spacing:0">Aktiv</span><span class="c" style="left:719px;width:90px;letter-spacing:0"><span class="d1">1</span><span class="d1">1</span>0</span><span class="c" style="left:895px;width:114px;letter-spacing:0">9<span class="d1">1</span>00</span><span class="c" style="left:1012px;width:30px;letter-spacing:0"><span class="d1">1</span></span><span class="c" style="left:1046px;width:138px;letter-spacing:0">USD</span></div>
<div class="r" style="top:423px"><span class="c" style="left:19px;width:113px;letter-spacing:0"><span class="d1">1</span><span class="d1">1</span>05</span><span class="c" style="left:135px;width:348px;letter-spacing:0.092px"> &gt;  &gt;  &gt; Ausgestellte Gutschriften</span><span class="c" style="left:486px;width:114px;letter-spacing:0">Aktiv</span><span class="c" style="left:719px;width:90px;letter-spacing:0"><span class="d1">1</span><span class="d1">1</span>0</span><span class="c" style="left:895px;width:114px;letter-spacing:0">9<span class="d1">1</span>00</span><span class="c" style="left:1012px;width:30px;letter-spacing:0"><span class="d1">1</span></span><span class="c" style="left:1046px;width:138px;letter-spacing:0">USD</span></div>
<div class="r" style="top:438px"><span class="c" style="left:19px;width:113px;letter-spacing:0"><span class="d1">1</span><span class="d1">1</span>09</span><span class="c" style="left:135px;width:348px;letter-spacing:0.163px"> &gt;  &gt;  &gt; Delkredere</span><span class="c" style="left:486px;width:114px;letter-spacing:0">Aktiv</span><span class="c" style="left:719px;width:90px;letter-spacing:0"><span class="d1">1</span><span class="d1">1</span>0</span><span class="c" style="left:895px;width:114px;letter-spacing:0">9<span class="d1">1</span>00</span><span class="c" style="left:1012px;width:30px;letter-spacing:0"><span class="d1">1</span></span></div>
<div class="r" style="top:453px"><span class="c" style="left:19px;width:113px;letter-spacing:0"><span class="d1">1</span><span class="d1">1</span><span class="d1">1</span>0</span><span class="c" style="left:135px;width:348px;letter-spacing:0.100px"> &gt;  &gt;  &gt; Forderungen aus Lieferungen und Leistungen gegenüber</span><span class="c" style="left:486px;width:114px;letter-spacing:0">Aktiv</span><span class="c" style="left:719px;width:90px;letter-spacing:0"><span class="d1">1</span><span class="d1">1</span>0</span><span class="c" style="left:895px;width:114px;letter-spacing:0">9<span class="d1">1</span>00</span><span class="c" style="left:1012px;width:30px;letter-spacing:0"><span class="d1">1</span></span><i class="arr"></i></div>
<div class="r" style="top:468px"><span class="c" style="left:486px;width:114px;letter-spacing:0">Aktiv</span><span class="c" style="left:602px;width:113px;letter-spacing:0.2px">Überschrift</span><span class="c" style="left:1012px;width:30px;letter-spacing:0"><span class="d1">1</span></span></div>
<div class="r b" style="top:483px"><span class="c" style="left:19px;width:113px;letter-spacing:0"><span class="d1">1</span><span class="d1">1</span>4</span><span class="c" style="left:135px;width:348px;letter-spacing:0.267px"> &gt;  &gt; Übrige kurzfristige Forderungen</span><span class="c" style="left:486px;width:114px;letter-spacing:0">Aktiv</span><span class="c" style="left:602px;width:113px;letter-spacing:0.5px">Gruppe</span><span class="c" style="left:719px;width:90px;letter-spacing:0"><span class="d1">1</span>0</span><span class="c" style="left:1012px;width:30px;letter-spacing:0"><span class="d1">1</span></span></div>
<div class="r" style="top:498px"><span class="c" style="left:19px;width:113px;letter-spacing:0"><span class="d1">1</span><span class="d1">1</span>40</span><span class="c" style="left:135px;width:348px;letter-spacing:0.164px"> &gt;  &gt;  &gt; Vorschüsse und Darlehen</span><span class="c" style="left:486px;width:114px;letter-spacing:0">Aktiv</span><span class="c" style="left:719px;width:90px;letter-spacing:0"><span class="d1">1</span><span class="d1">1</span>4</span><span class="c" style="left:895px;width:114px;letter-spacing:0">9<span class="d1">1</span>00</span><span class="c" style="left:1012px;width:30px;letter-spacing:0"><span class="d1">1</span></span></div>
<div class="r" style="top:513px"><span class="c" style="left:19px;width:113px;letter-spacing:0"><span class="d1">1</span><span class="d1">1</span>49</span><span class="c" style="left:135px;width:348px;letter-spacing:0.142px"> &gt;  &gt;  &gt; Wertberichtigungen Vorschüsse und Darlehen</span><span class="c" style="left:486px;width:114px;letter-spacing:0">Aktiv</span><span class="c" style="left:719px;width:90px;letter-spacing:0"><span class="d1">1</span><span class="d1">1</span>4</span><span class="c" style="left:895px;width:114px;letter-spacing:0">9<span class="d1">1</span>00</span><span class="c" style="left:1012px;width:30px;letter-spacing:0"><span class="d1">1</span></span></div>
<div class="r" style="top:528px"><span class="c" style="left:19px;width:113px;letter-spacing:0"><span class="d1">1</span><span class="d1">1</span>70</span><span class="c" style="left:135px;width:348px;letter-spacing:0.100px"> &gt;  &gt;  &gt; Vorsteuer MWST Material, Waren, Dienstleistungen, Energie</span><span class="c" style="left:486px;width:114px;letter-spacing:0">Aktiv</span><span class="c" style="left:719px;width:90px;letter-spacing:0"><span class="d1">1</span><span class="d1">1</span>4</span><span class="c" style="left:895px;width:114px;letter-spacing:0">9<span class="d1">1</span>00</span><span class="c" style="left:1012px;width:30px;letter-spacing:0"><span class="d1">1</span></span><i class="arr"></i></div>
<div class="r" style="top:543px"><span class="c" style="left:19px;width:113px;letter-spacing:0"><span class="d1">1</span><span class="d1">1</span>7<span class="d1">1</span></span><span class="c" style="left:135px;width:348px;letter-spacing:0.052px"> &gt;  &gt;  &gt; Vorsteuer MWST Investitionen, übriger Betriebsaufwand</span><span class="c" style="left:486px;width:114px;letter-spacing:0">Aktiv</span><span class="c" style="left:719px;width:90px;letter-spacing:0"><span class="d1">1</span><span class="d1">1</span>4</span><span class="c" style="left:895px;width:114px;letter-spacing:0">9<span class="d1">1</span>00</span><span class="c" style="left:1012px;width:30px;letter-spacing:0"><span class="d1">1</span></span></div>
<div class="r" style="top:558px"><span class="c" style="left:19px;width:113px;letter-spacing:0"><span class="d1">1</span><span class="d1">1</span>76</span><span class="c" style="left:135px;width:348px;letter-spacing:0.134px"> &gt;  &gt;  &gt; Verrechnungssteuer</span><span class="c" style="left:486px;width:114px;letter-spacing:0">Aktiv</span><span class="c" style="left:719px;width:90px;letter-spacing:0"><span class="d1">1</span><span class="d1">1</span>4</span><span class="c" style="left:895px;width:114px;letter-spacing:0">9<span class="d1">1</span>00</span><span class="c" style="left:1012px;width:30px;letter-spacing:0"><span class="d1">1</span></span></div>
<div class="r" style="top:573px"><span class="c" style="left:19px;width:113px;letter-spacing:0"><span class="d1">1</span><span class="d1">1</span>80</span><span class="c" style="left:135px;width:348px;letter-spacing:0.100px"> &gt;  &gt;  &gt; Forderungen gegenüber Sozialversicherungen und Vorsorge</span><span class="c" style="left:486px;width:114px;letter-spacing:0">Aktiv</span><span class="c" style="left:719px;width:90px;letter-spacing:0"><span class="d1">1</span><span class="d1">1</span>4</span><span class="c" style="left:895px;width:114px;letter-spacing:0">9<span class="d1">1</span>00</span><span class="c" style="left:1012px;width:30px;letter-spacing:0"><span class="d1">1</span></span><i class="arr"></i></div>
<div class="r" style="top:588px"><span class="c" style="left:19px;width:113px;letter-spacing:0"><span class="d1">1</span><span class="d1">1</span>88</span><span class="c" style="left:135px;width:348px;letter-spacing:0.099px"> &gt;  &gt;  &gt; Quellensteuer</span><span class="c" style="left:486px;width:114px;letter-spacing:0">Aktiv</span><span class="c" style="left:719px;width:90px;letter-spacing:0"><span class="d1">1</span><span class="d1">1</span>4</span><span class="c" style="left:895px;width:114px;letter-spacing:0">9<span class="d1">1</span>00</span><span class="c" style="left:1012px;width:30px;letter-spacing:0"><span class="d1">1</span></span></div>
<div class="r" style="top:603px"><span class="c" style="left:19px;width:113px;letter-spacing:0"><span class="d1">1</span><span class="d1">1</span>90</span><span class="c" style="left:135px;width:348px;letter-spacing:0.121px"> &gt;  &gt;  &gt; Sonstige kurzfristige Forderungen</span><span class="c" style="left:486px;width:114px;letter-spacing:0">Aktiv</span><span class="c" style="left:719px;width:90px;letter-spacing:0"><span class="d1">1</span><span class="d1">1</span>4</span><span class="c" style="left:895px;width:114px;letter-spacing:0">9<span class="d1">1</span>00</span><span class="c" style="left:1012px;width:30px;letter-spacing:0"><span class="d1">1</span></span></div>
<div class="r" style="top:618px"><span class="c" style="left:19px;width:113px;letter-spacing:0"><span class="d1">1</span><span class="d1">1</span>99</span><span class="c" style="left:135px;width:348px;letter-spacing:0.105px"> &gt;  &gt;  &gt; Wertberichtigungen sonstige kurzfristige Forderungen</span><span class="c" style="left:486px;width:114px;letter-spacing:0">Aktiv</span><span class="c" style="left:719px;width:90px;letter-spacing:0"><span class="d1">1</span><span class="d1">1</span>4</span><span class="c" style="left:895px;width:114px;letter-spacing:0">9<span class="d1">1</span>00</span><span class="c" style="left:1012px;width:30px;letter-spacing:0"><span class="d1">1</span></span></div>
<div class="r" style="top:633px"><span class="c" style="left:486px;width:114px;letter-spacing:0">Aktiv</span><span class="c" style="left:602px;width:113px;letter-spacing:0.2px">Überschrift</span><span class="c" style="left:1012px;width:30px;letter-spacing:0"><span class="d1">1</span></span></div>
<div class="r b" style="top:648px"><span class="c" style="left:19px;width:113px;letter-spacing:0"><span class="d1">1</span>20</span><span class="c" style="left:135px;width:348px;letter-spacing:0.211px"> &gt;  &gt; Vorräte und nicht fakturierte Dienstleistungen</span><span class="c" style="left:486px;width:114px;letter-spacing:0">Aktiv</span><span class="c" style="left:602px;width:113px;letter-spacing:0.5px">Gruppe</span><span class="c" style="left:719px;width:90px;letter-spacing:0"><span class="d1">1</span>0</span><span class="c" style="left:1012px;width:30px;letter-spacing:0"><span class="d1">1</span></span></div>
</div>
<div class="inp" style="left:16px;width:116px;border-color:#3a8ee6"></div>
<div class="inp" style="left:133px;width:351px"></div>
<div class="inp" style="left:484px;width:117px"></div>
<div class="inp" style="left:602px;width:116px"></div>
<div class="inp" style="left:718px;width:94px"></div>
<div class="inp" style="left:813px;width:80px"></div>
<div class="inp" style="left:894px;width:117px"></div>
<div class="inp" style="left:1012px;width:34px"></div>
<div class="inp" style="left:1047px;width:140px"></div>
<div class="abs" style="left:18px;top:673px;width:1px;height:16px;background:#000"></div>
<div class="abs" style="left:1015px;top:675px;font-size:12px;line-height:15px"><span class="d1">1</span></div>
<div class="abs" style="left:0;top:701px;width:1200px;height:1px;background:#dadada"></div>
<div class="status">Kontonummer</div>
<div class="abs" style="left:1084px;top:703px;width:1px;height:13px;background:#d8d8d8"></div>
<div class="abs" style="left:1089px;top:704px;font-size:10px;line-height:13px;letter-spacing:-0.3px">350 / 350</div>
</body></html>
